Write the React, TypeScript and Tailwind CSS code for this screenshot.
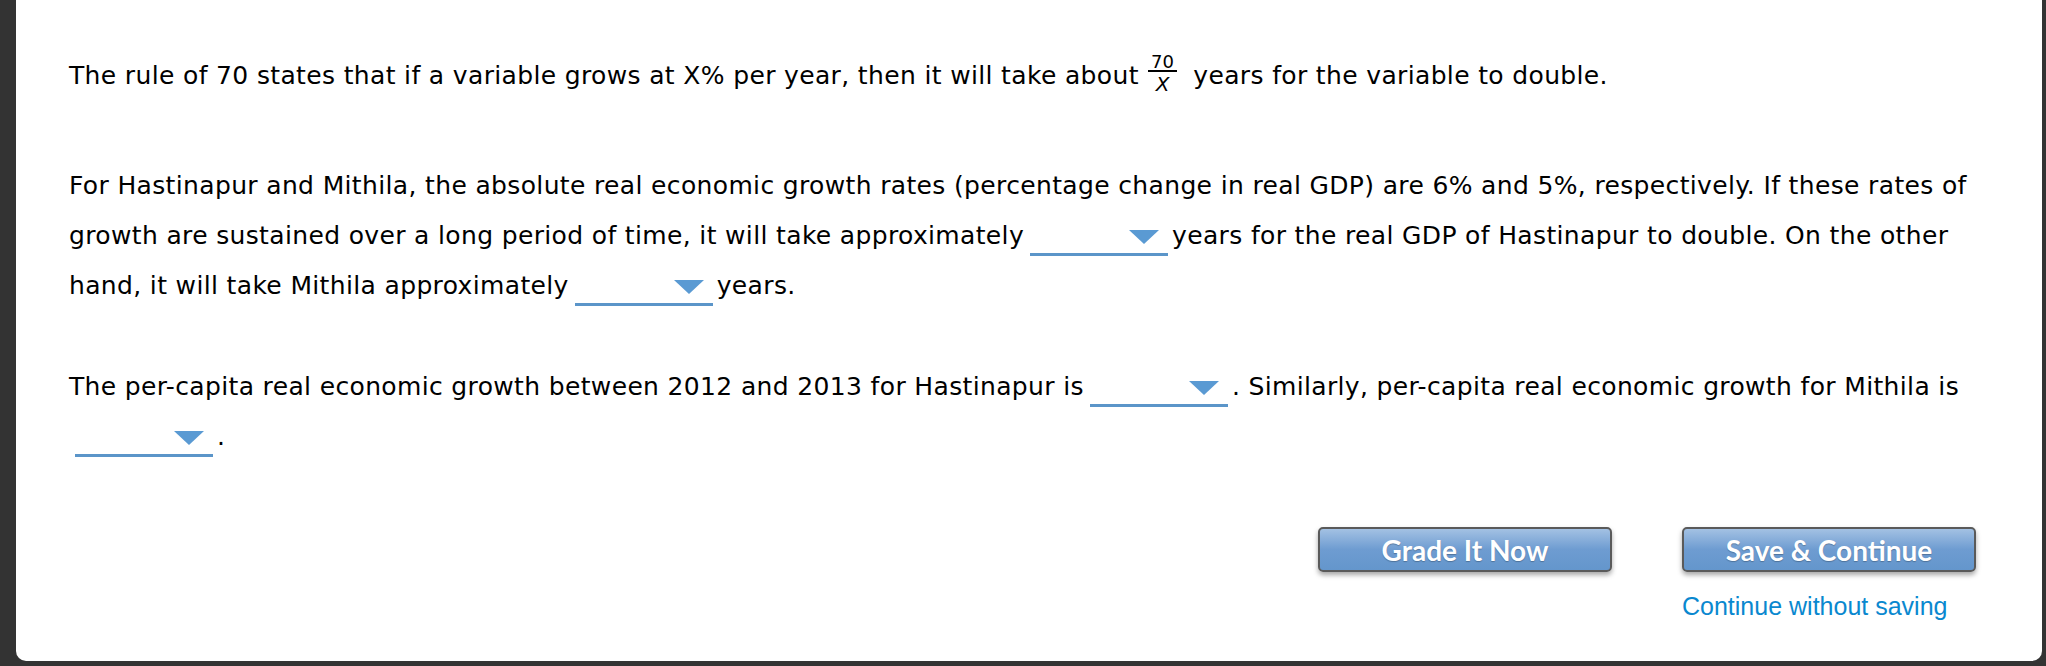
import React from "react";

const Dropdown = () => (
  <span className="inline-block overflow-hidden h-[28px] w-[138px] ml-[6px] mr-[4px] border-b-[3px] border-[#5b95c9] align-[-12px]">
    <svg className="block ml-auto mr-[9px] mt-[2px]" width="30" height="14" viewBox="0 0 30 14">
      <polygon points="0,0 30,0 15,14" fill="#5a9ad3" />
    </svg>
  </span>
);

const Line = ({ children }: { children: React.ReactNode }) => (
  <div className="h-[50px] leading-[50px] whitespace-nowrap">{children}</div>
);

const btn =
  "w-[294px] h-[45px] rounded-[5px] border-2 border-[#5a5a5a] bg-gradient-to-b from-[#a3c1e3] via-[#6e9cd1] to-[#6496cc] text-white text-[28px] font-bold shadow-[0_3px_5px_rgba(0,0,0,0.35)] [text-shadow:0_1px_1px_rgba(0,0,0,0.25)]";

export default function App() {
  return (
    <div className="h-[666px] w-[2046px] bg-[#333333] pl-[16px] pr-[4px] pb-[5px]">
      <div
        className="h-full bg-white rounded-b-[10px] pl-[53px] pt-[51px] text-black text-[25px] tracking-[0.35px]"
        style={{ fontFamily: '"DejaVu Sans", Verdana, sans-serif' }}
      >
        <div>
          <Line>
            The rule of 70 states that if a variable grows at X% per year, then it will take about{" "}
            <span className="inline-flex flex-col items-center align-[16px] leading-none ml-[1px] mr-[8px] tracking-normal">
              <span className="text-[18px] leading-[17px] px-[3px] border-b-[2px] border-black">70</span>
              <span className="text-[20px] leading-[24px] italic">X</span>
            </span>{" "}
            years for the variable to double.
          </Line>
        </div>
        <div className="mt-[60px]">
          <Line>
            For Hastinapur and Mithila, the absolute real economic growth rates (percentage change in real GDP) are 6% and 5%, respectively. If these rates of
          </Line>
          <Line>
            growth are sustained over a long period of time, it will take approximately
            <Dropdown />
            years for the real GDP of Hastinapur to double. On the other
          </Line>
          <Line>
            hand, it will take Mithila approximately
            <Dropdown />
            years.
          </Line>
        </div>
        <div className="mt-[51px]">
          <Line>
            The per-capita real economic growth between 2012 and 2013 for Hastinapur is
            <Dropdown />
            . Similarly, per-capita real economic growth for Mithila is
          </Line>
          <Line>
            <Dropdown />.
          </Line>
        </div>
        <div className="mt-[65px] flex justify-end gap-[70px] pr-[66px] tracking-normal">
          <button className={btn} style={{ fontFamily: 'Lato, "Open Sans", sans-serif' }}>
            Grade It Now
          </button>
          <div className="flex flex-col items-start">
            <button className={btn} style={{ fontFamily: 'Lato, "Open Sans", sans-serif' }}>
              Save &amp; Continue
            </button>
            <a
              className="mt-[20px] text-[25px] leading-[28px] text-[#0a88cf]"
              style={{ fontFamily: '"Liberation Sans", Arial, sans-serif' }}
            >
              Continue without saving
            </a>
          </div>
        </div>
      </div>
    </div>
  );
}
